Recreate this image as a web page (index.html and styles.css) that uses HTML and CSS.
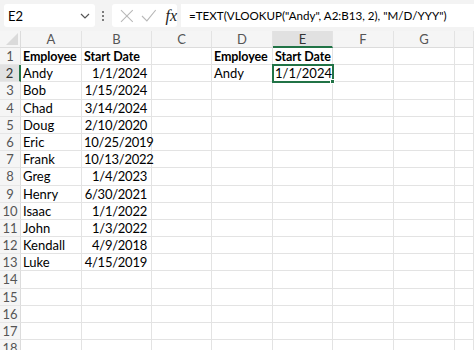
FILE: index.html
```html
<!DOCTYPE html>
<html lang="en">
<head>
    <meta charset="UTF-8">
    <title>VLOOKUP date</title>
    <link rel="stylesheet" href="styles.css">
</head>
<body>
    <div class="formula-bar">
        <div class="name-box">
            <span>E2</span>
            <svg class="chevron" width="10" height="6" viewBox="0 0 10 6"><path d="M1 1 L5 5 L9 1" fill="none" stroke="#555" stroke-width="1.2"/></svg>
        </div>
        <div class="dots"><i></i><i></i><i></i></div>
        <div class="actions">
            <svg width="14" height="14" viewBox="0 0 14 14"><path d="M1 1 L13 13 M13 1 L1 13" stroke="#b8b8b8" stroke-width="1.1"/></svg>
            <svg width="16" height="14" viewBox="0 0 16 14"><path d="M1 7 L6 12 L15 1" fill="none" stroke="#b8b8b8" stroke-width="1.1"/></svg>
            <span class="fx">fx</span>
        </div>
        <div class="formula">=TEXT(VLOOKUP("Andy", A2:B13, 2), "M/D/YYY")</div>
    </div>

    <div class="sheet" id="sheet"></div>

    <script>
        const cols = ['A', 'B', 'C', 'D', 'E', 'F', 'G', ''];
        const data = [
            ['Employee', 'Start Date'],
            ['Andy', '1/1/2024'],
            ['Bob', '1/15/2024'],
            ['Chad', '3/14/2024'],
            ['Doug', '2/10/2020'],
            ['Eric', '10/25/2019'],
            ['Frank', '10/13/2022'],
            ['Greg', '1/4/2023'],
            ['Henry', '6/30/2021'],
            ['Isaac', '1/1/2022'],
            ['John', '1/3/2022'],
            ['Kendall', '4/9/2018'],
            ['Luke', '4/15/2019']
        ];
        const sheet = document.getElementById('sheet');

        function cell(cls, text) {
            const d = document.createElement('div');
            d.className = cls;
            if (text) d.textContent = text;
            sheet.appendChild(d);
            return d;
        }

        cell('corner');
        cols.forEach(c => cell(c === 'E' ? 'col-head active' : 'col-head', c));

        for (let r = 1; r <= 18; r++) {
            cell(r === 2 ? 'row-head active' : 'row-head', String(r));
            const row = data[r - 1] || [];
            cols.forEach((c, i) => {
                let cls = 'cell';
                let text = '';
                if (i < 2 && row[i]) {
                    text = row[i];
                    if (r === 1) cls += ' bold';
                    else if (i === 1) cls += ' num';
                }
                if (c === 'D' && r === 1) { text = 'Employee'; cls += ' bold'; }
                if (c === 'E' && r === 1) { text = 'Start Date'; cls += ' bold'; }
                if (c === 'D' && r === 2) text = 'Andy';
                if (c === 'E' && r === 2) { text = '1/1/2024'; cls += ' selected'; }
                const d = cell(cls, text);
                if (cls.includes('selected')) {
                    const h = document.createElement('span');
                    h.className = 'handle';
                    d.appendChild(h);
                }
            });
        }
    </script>
</body>
</html>
```

FILE: styles.css
```css
body {
    margin: 0;
    width: 474px;
    height: 350px;
    overflow: hidden;
    background-color: #fff;
    font-family: Lato, "Noto Sans", sans-serif;
    color: #000;
}
.formula-bar {
    display: flex;
    align-items: center;
    height: 31px;
    padding: 0 0 0 4px;
    box-sizing: border-box;
    background-color: #f3f3f3;
}
.name-box {
    display: flex;
    align-items: center;
    justify-content: space-between;
    width: 91px;
    height: 23px;
    padding: 0 5px 0 4px;
    box-sizing: border-box;
    background-color: #fff;
    border-radius: 3px;
    font-size: 13px;
}
.dots {
    display: flex;
    flex-direction: column;
    gap: 2px;
    margin: 0 8px 0 7px;
}
.dots i {
    width: 2px;
    height: 2px;
    background-color: #555;
    border-radius: 50%;
}
.actions {
    display: flex;
    align-items: center;
    gap: 7px;
    width: 65px;
    height: 23px;
    padding-left: 8px;
    box-sizing: border-box;
    background-color: #fff;
    border-radius: 3px;
}
.fx {
    font-family: "Liberation Serif", serif;
    font-style: italic;
    font-size: 16px;
    color: #222;
    margin-left: 2px;
}
.formula {
    flex: 1;
    height: 23px;
    line-height: 23px;
    margin-left: 4px;
    padding-left: 8px;
    background-color: #fff;
    font-size: 11.6px;
    white-space: nowrap;
    overflow: hidden;
}
.sheet {
    display: grid;
    grid-template-columns: 21px 61px 70px 60px 61px 60px 61px 61px 1fr;
    grid-template-rows: 17px repeat(18, 17.2px);
    font-size: 13px;
}
.corner {
    position: relative;
    background-color: #f5f5f5;
    border-right: 1px solid #dcdcdc;
    border-bottom: 1px solid #dcdcdc;
}
.corner::after {
    content: "";
    position: absolute;
    right: 2px;
    bottom: 2px;
    border-left: 12px solid transparent;
    border-bottom: 12px solid #dadada;
}
.col-head {
    background-color: #f5f5f5;
    border-right: 1px solid #e3e3e3;
    border-bottom: 1px solid #dcdcdc;
    color: #555;
    text-align: center;
    line-height: 17px;
    font-size: 13px;
}
.col-head.active {
    background-color: #e1e1e1;
    border-bottom: 2px solid #217346;
    color: #333;
}
.row-head {
    background-color: #f5f5f5;
    border-right: 1px solid #dcdcdc;
    border-bottom: 1px solid #e6e6e6;
    color: #555;
    text-align: center;
    line-height: 17px;
}
.row-head.active {
    background-color: #e1e1e1;
    border-right: 2px solid #217346;
    color: #333;
}
.cell {
    position: relative;
    border-right: 1px solid #e3e3e3;
    border-bottom: 1px solid #e3e3e3;
    padding: 0 3px 0 2px;
    line-height: 17px;
    white-space: nowrap;
}
.bold {
    font-weight: bold;
    font-size: 12.5px;
    letter-spacing: -0.1px;
}
.num {
    text-align: right;
    letter-spacing: -0.25px;
    padding-right: 4px;
}
.selected {
    outline: 2px solid #217346;
    outline-offset: -1px;
    z-index: 1;
}
.handle {
    position: absolute;
    right: -3px;
    bottom: -3px;
    width: 5px;
    height: 5px;
    background-color: #217346;
    border: 1px solid #fff;
    box-sizing: border-box;
}
```
